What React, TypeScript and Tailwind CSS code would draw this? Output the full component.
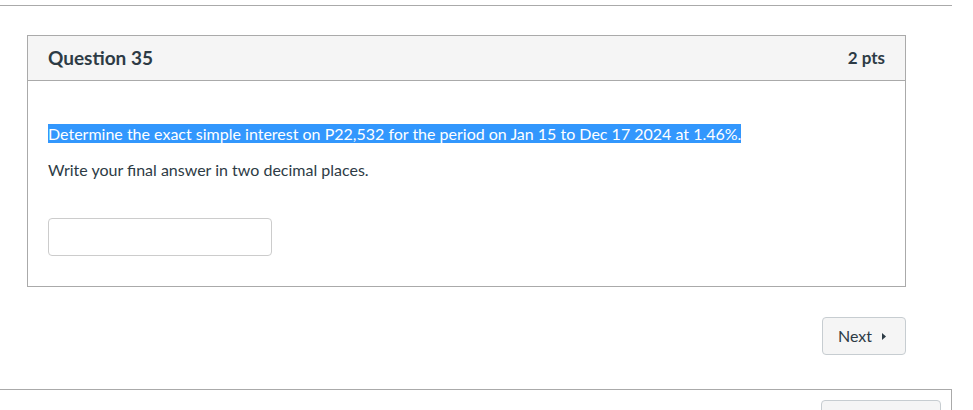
export default function App() {
  return (
    <div className="w-[973px] h-[410px] overflow-hidden bg-white font-['Lato','Open_Sans',sans-serif] text-[#2d3b45]">
      <div className="w-[952px]">
        {/* barre du haut */}
        <div className="h-[6px] border-b border-[#aaaaaa]" />

        {/* bloc question */}
        <div className="mt-[29px] ml-[27px] w-[879px] border border-[#aaaaaa]">
          <div className="h-[45px] flex items-center justify-between px-[20px] bg-[#f5f5f5] border-b border-[#aaaaaa]">
            <span className="text-[19px] font-bold">Question 35</span>
            <span className="text-[17px] font-bold">2 pts</span>
          </div>
          <div className="pt-[41px] pb-[30px] px-[20px] text-[16px] leading-[23px]">
            <p className="mb-[13px]">
              <span className="bg-[#3297fd] text-white">
                Determine the exact simple interest on P22,532 for the period on Jan 15 to Dec 17 2024 at 1.46%.
              </span>
            </p>
            <p>Write your final answer in two decimal places.</p>
            <input
              type="text"
              className="mt-[37px] block w-[224px] h-[38px] border border-[#cccccc] rounded-[4px] bg-white"
            />
          </div>
        </div>

        {/* bouton suivant */}
        <div className="flex justify-end w-[906px] mt-[30px]">
          <button className="w-[84px] h-[38px] flex items-center pl-[15px] gap-[10px] bg-[#f5f5f5] border border-[#c7cdd1] rounded-[4px] text-[16px] text-[#2d3b45]">
            <span>Next</span>
            <svg width="4" height="7" viewBox="0 0 4 7">
              <path d="M0 0 L4 3.5 L0 7 Z" fill="#2d3b45" />
            </svg>
          </button>
        </div>

        {/* bloc du bas */}
        <div className="mt-[34px] border-t border-r border-[#aaaaaa] flex justify-end pt-[10px] pr-[10px]">
          <div className="w-[120px] h-[38px] bg-[#f5f5f5] border border-[#c7cdd1] rounded-[4px]" />
        </div>
      </div>
    </div>
  );
}
